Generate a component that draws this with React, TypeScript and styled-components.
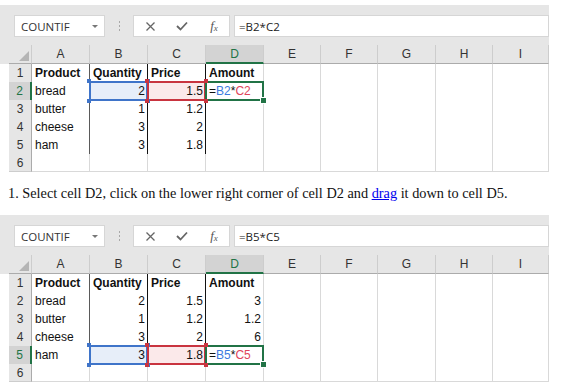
import React from 'react';
import styled, { createGlobalStyle, css } from 'styled-components';

type Kind = 'blue' | 'red' | 'green';

const GRID = '23px 58px 58px 58px 58px 57px 57px 58px 57px 56px';
const LETTERS = ['A', 'B', 'C', 'D', 'E', 'F', 'G', 'H', 'I'];

const markColor: Record<Kind, string> = {
  blue: '#3f74c9',
  red: '#c9343f',
  green: '#217346',
};

const fillColor: Record<Kind, string> = {
  blue: '#e7eef9',
  red: '#fbe9ea',
  green: '#ffffff',
};

const GlobalStyle = createGlobalStyle`
  body {
    margin: 0;
    background: #fff;
    font-family: "Liberation Sans", Arial, sans-serif;
  }
`;

const Page = styled.div`
  display: flex;
  flex-direction: column;
  width: 567px;
  padding-top: 5px;
`;

const SheetWrap = styled.div`
  width: 549px;
`;

const Toolbar = styled.div`
  display: flex;
  align-items: flex-start;
  height: 40px;
  box-sizing: border-box;
  padding: 10px 0 0 14px;
  background: #e6e6e6;
`;

const Box = styled.div`
  height: 22px;
  box-sizing: border-box;
  background: #fff;
  border: 1px solid #d6d6d6;
  display: flex;
  align-items: center;
  color: #222;
  font-size: 12px;
`;

const NameBox = styled(Box)`
  width: 91px;
  padding: 0 5px 0 6px;
  justify-content: space-between;
  font-family: "Open Sans", "Liberation Sans", sans-serif;
  font-size: 11.5px;
  color: #333;
`;

const Caret = styled.span`
  width: 0;
  height: 0;
  border-left: 3px solid transparent;
  border-right: 3px solid transparent;
  border-top: 3px solid #777;
  margin-right: 1px;
`;

const Grip = styled.div`
  width: 28px;
  height: 22px;
  display: flex;
  flex-direction: column;
  align-items: center;
  justify-content: center;
  gap: 2px;

  span {
    width: 1px;
    height: 2px;
    background: #a8a8a8;
  }
`;

const FxBox = styled(Box)`
  width: 97px;
  display: grid;
  grid-template-columns: repeat(3, 32px);
  justify-items: center;
  color: #6b6b6b;
`;

const Fx = styled.span`
  font-family: "Liberation Serif", serif;
  font-style: italic;
  font-size: 13px;
  color: #555;

  sub {
    font-size: 9px;
    vertical-align: -1px;
  }
`;

const FormulaInput = styled(Box)`
  flex: 1;
  margin-left: 4px;
  padding-left: 4px;
  font-family: "Open Sans", "Liberation Sans", sans-serif;
  font-size: 11.5px;
  color: #222;
`;

const HeaderRow = styled.div`
  display: grid;
  grid-template-columns: ${GRID};
  padding-left: 9px;
  height: 19px;
  background: #e6e6e6;
`;

const ColHead = styled.div<{ $active?: boolean }>`
  box-sizing: border-box;
  display: flex;
  align-items: center;
  justify-content: center;
  font-size: 12px;
  color: #333;
  border-right: 1px solid #cdcdcd;
  border-bottom: 1px solid #ababab;
  ${(p) =>
    p.$active &&
    css`
      background: #d3d3d3;
      color: #217346;
      border-bottom: 2px solid #217346;
      padding-top: 1px;
    `}
`;

const Corner = styled.div`
  box-sizing: border-box;
  position: relative;
  border-right: 1px solid #cdcdcd;
  border-bottom: 1px solid #ababab;

  &::after {
    content: '';
    position: absolute;
    right: 2px;
    bottom: 2px;
    border-left: 10px solid transparent;
    border-bottom: 10px solid #b5b5b5;
  }
`;

const Body = styled.div`
  padding-left: 9px;
`;

const Row = styled.div`
  display: grid;
  grid-template-columns: ${GRID};
  height: 18px;
`;

const RowHead = styled.div<{ $active?: boolean }>`
  box-sizing: border-box;
  display: flex;
  align-items: center;
  justify-content: center;
  font-size: 12px;
  color: #333;
  background: #e6e6e6;
  border-bottom: 1px solid #cdcdcd;
  border-right: 1px solid #ababab;
  ${(p) =>
    p.$active &&
    css`
      background: #d3d3d3;
      color: #217346;
      border-right: 2px solid #217346;
    `}
`;

const Cell = styled.div<{
  $right?: boolean;
  $bold?: boolean;
  $edge?: string;
  $under?: boolean;
  $kind?: Kind;
}>`
  box-sizing: border-box;
  position: relative;
  white-space: nowrap;
  font-size: 12px;
  line-height: 17px;
  padding: 1px ${(p) => (p.$right ? '2px' : '0')} 0 ${(p) => (p.$right ? '0' : '3px')};
  text-align: ${(p) => (p.$right ? 'right' : 'left')};
  font-weight: ${(p) => (p.$bold ? 700 : 400)};
  color: #111;
  background: ${(p) => (p.$kind ? fillColor[p.$kind] : '#fff')};
  border-right: 1px solid ${(p) => p.$edge || '#d9d9d9'};
  border-bottom: 1px solid ${(p) => (p.$under ? '#111' : '#d9d9d9')};
`;

const Frame = styled.span<{ $kind: Kind }>`
  position: absolute;
  top: -1px;
  left: -1px;
  right: -1px;
  bottom: -1px;
  border: 2px solid ${(p) => markColor[p.$kind]};
  z-index: ${(p) => (p.$kind === 'blue' ? 1 : p.$kind === 'red' ? 2 : 3)};
  pointer-events: none;
`;

const Handle = styled.span<{ $kind: Kind; $v: 'top' | 'bottom'; $h: 'left' | 'right' }>`
  position: absolute;
  z-index: 4;
  width: 4px;
  height: 4px;
  background: ${(p) => markColor[p.$kind]};
  ${(p) => p.$v}: -3px;
  ${(p) => p.$h}: -3px;
  ${(p) =>
    p.$kind === 'green' &&
    css`
      width: 5px;
      height: 5px;
      border: 1px solid #fff;
      ${p.$v}: -4px;
      ${p.$h}: -4px;
    `}
`;

const Ref = styled.span<{ $kind: Kind }>`
  color: ${(p) => (p.$kind === 'blue' ? '#3d7be0' : '#e0455a')};
`;

const Caption = styled.p`
  margin: 0;
  height: 43px;
  display: flex;
  align-items: center;
  padding-left: 8px;
  white-space: pre;
  font-family: "Liberation Serif", "Times New Roman", serif;
  font-size: 14.3px;
  color: #111;

  a {
    color: #0000ee;
    text-decoration: underline;
  }
`;

interface CellInfo {
  text?: React.ReactNode;
  right?: boolean;
  bold?: boolean;
  kind?: Kind;
}

const Marked: React.FC<{ kind: Kind }> = ({ kind }) => (
  <>
    <Frame $kind={kind} />
    {kind === 'green' ? (
      <Handle $kind={kind} $v="bottom" $h="right" />
    ) : (
      <>
        <Handle $kind={kind} $v="top" $h="left" />
        <Handle $kind={kind} $v="top" $h="right" />
        <Handle $kind={kind} $v="bottom" $h="left" />
        <Handle $kind={kind} $v="bottom" $h="right" />
      </>
    )}
  </>
);

const CrossIcon = () => (
  <svg width="11" height="11" viewBox="0 0 11 11">
    <path d="M1.5 1.5 L9.5 9.5 M9.5 1.5 L1.5 9.5" stroke="#666" strokeWidth="1.3" fill="none" />
  </svg>
);

const CheckIcon = () => (
  <svg width="12" height="10" viewBox="0 0 12 10">
    <path d="M1 5 L4.5 8.5 L11 1.5" stroke="#666" strokeWidth="1.8" fill="none" />
  </svg>
);

interface SheetProps {
  active: number;
  formula: [string, string];
  amounts: string[];
}

const products = ['bread', 'butter', 'cheese', 'ham'];
const quantities = ['2', '1', '3', '3'];
const prices = ['1.5', '1.2', '2', '1.8'];

const Sheet: React.FC<SheetProps> = ({ active, formula, amounts }) => {
  const formulaText = (
    <>
      =<Ref $kind="blue">{formula[0]}</Ref>*<Ref $kind="red">{formula[1]}</Ref>
    </>
  );

  const rows: CellInfo[][] = [
    [
      { text: 'Product', bold: true },
      { text: 'Quantity', bold: true },
      { text: 'Price', bold: true },
      { text: 'Amount', bold: true },
    ],
  ];
  products.forEach((p, i) => {
    const isActive = i + 2 === active;
    rows.push([
      { text: p },
      { text: quantities[i], right: true, kind: isActive ? 'blue' : undefined },
      { text: prices[i], right: true, kind: isActive ? 'red' : undefined },
      isActive ? { text: formulaText, kind: 'green' } : { text: amounts[i], right: true },
    ]);
  });
  rows.push([{}, {}, {}, {}]);

  // table borders: A|B a bit lighter than B|C and C|D
  const edges = ['#5a5a5a', '#111', '#111'];

  return (
    <SheetWrap>
      <Toolbar>
        <NameBox>
          COUNTIF
          <Caret />
        </NameBox>
        <Grip>
          <span />
          <span />
          <span />
        </Grip>
        <FxBox>
          <CrossIcon />
          <CheckIcon />
          <Fx>
            f<sub>x</sub>
          </Fx>
        </FxBox>
        <FormulaInput>
          ={formula[0]}*{formula[1]}
        </FormulaInput>
      </Toolbar>
      <HeaderRow>
        <Corner />
        {LETTERS.map((l) => (
          <ColHead key={l} $active={l === 'D'}>
            {l}
          </ColHead>
        ))}
      </HeaderRow>
      <Body>
        {rows.map((cells, ri) => {
          const r = ri + 1;
          return (
            <Row key={r}>
              <RowHead $active={r === active}>{r}</RowHead>
              {LETTERS.map((l, ci) => {
                const c = cells[ci] || {};
                return (
                  <Cell
                    key={l}
                    $right={c.right}
                    $bold={c.bold}
                    $kind={c.kind}
                    $edge={r <= 5 && ci < 3 ? edges[ci] : undefined}
                    $under={r === 1 && ci < 4}
                  >
                    {c.text}
                    {c.kind && <Marked kind={c.kind} />}
                  </Cell>
                );
              })}
            </Row>
          );
        })}
      </Body>
    </SheetWrap>
  );
};

const App: React.FC = () => (
  <>
    <GlobalStyle />
    <Page>
      <Sheet active={2} formula={['B2', 'C2']} amounts={['', '', '', '']} />
      <Caption>
        1. Select cell D2, click on the lower right corner of cell D2 and <a href="#drag">drag</a> it
        down to cell D5.
      </Caption>
      <Sheet active={5} formula={['B5', 'C5']} amounts={['3', '1.2', '6', '']} />
    </Page>
  </>
);

export default App;
